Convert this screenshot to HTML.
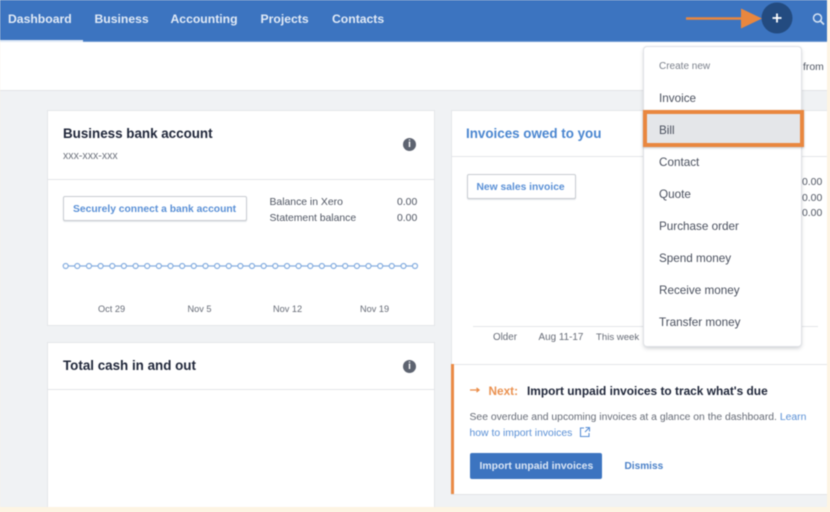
<!DOCTYPE html>
<html><head><meta charset="utf-8">
<style>
html,body{margin:0;padding:0;width:830px;height:512px;overflow:hidden;background:#fdf4e3}
#p{position:relative;width:830px;height:512px;overflow:hidden;font-family:"Liberation Sans",sans-serif;filter:blur(.5px);background:#fdf4e3}
#p div,#p span.t{position:absolute;white-space:nowrap}
.t{position:absolute;white-space:nowrap;line-height:14px}
.nav{color:#e1eaf6;font-weight:bold;font-size:12.2px;top:12px}
.card{background:#fff;box-shadow:0 0 0 1px #e4e6e9}
.h{color:#20273a;font-weight:bold;font-size:13.4px}
.g{color:#4f5562;font-size:10.4px}
.m{color:#4a505e;font-size:11.7px;left:659px}
.blue{color:#4a86d0;font-weight:bold}
.i{width:13px;height:13px;border-radius:50%;background:#5d6370;color:#fff;font:bold 10px/13px "Liberation Sans",sans-serif;text-align:center}
.line{height:1px;background:#e4e6e9}
</style></head><body><div id="p">
<div style="left:0;top:0;width:827px;height:507px;background:#f0f2f4"></div>
<div style="left:0;top:0;width:827px;height:42px;background:#3c74c0"></div>
<div style="left:0;top:40px;width:83px;height:2px;background:#dfe9f6"></div>
<div style="left:83px;top:41px;width:744px;height:1px;background:#6f9ad2"></div>
<div style="left:0;top:42px;width:827px;height:48px;background:#fff;border-bottom:1px solid #e2e4e7"></div>
<span class="t nav" style="left:8px">Dashboard</span>
<span class="t nav" style="left:94.500px">Business</span>
<span class="t nav" style="left:170.500px">Accounting</span>
<span class="t nav" style="left:260.500px">Projects</span>
<span class="t nav" style="left:332px">Contacts</span>
<svg style="position:absolute;left:685px;top:2px" width="145" height="34" viewBox="0 0 145 34">
<circle cx="92" cy="16" r="15.500" fill="#234b80"/>
<path d="M92 11.500v9M87.500 16h9" stroke="#fff" stroke-width="1.800" fill="none"/>
<path d="M1 16.500h58" stroke="#e9873f" stroke-width="2.500" fill="none"/>
<path d="M56 6.500l21 10-21 10z" fill="#e9873f"/>
<circle cx="132.500" cy="16" r="4" stroke="#d6e3f3" stroke-width="1.500" fill="none"/>
<path d="M135.500 19l3.500 3.500" stroke="#d6e3f3" stroke-width="1.700" fill="none"/>
</svg>
<span class="t" style="left:803px;top:60.500px;font-size:10.400px;color:#4f5562">from</span>

<div class="card" style="left:48px;top:111px;width:386px;height:214px"></div>
<span class="t h" style="left:63px;top:126.500px">Business bank account</span>
<span class="t" style="left:63px;top:148.500px;font-size:10.600px;color:#6b707b">xxx-xxx-xxx</span>
<div class="i" style="left:403px;top:138px">i</div>
<div class="line" style="left:48px;top:179px;width:386px"></div>
<div style="left:63px;top:196px;width:182px;height:23px;border:1px solid #c8ccd1;border-radius:2px;background:#fff;box-shadow:0 1px 1px #e4e6e9"></div>
<span class="t blue" style="left:73px;top:203px;font-size:10.300px;color:#5a90d6">Securely connect a bank account</span>
<span class="t g" style="left:269.500px;top:196px">Balance in Xero</span>
<span class="t g" style="left:269.500px;top:212px">Statement balance</span>
<span class="t g" style="left:397px;top:196px">0.00</span>
<span class="t g" style="left:397px;top:212px">0.00</span>
<svg style="position:absolute;left:60px;top:260px" width="362" height="12" viewBox="0 0 362 12">
<g fill="#fff" stroke="#86aee0" stroke-width="1.200">
<path d="M5.700 6H355"/>
<circle cx="5.700" cy="6" r="2.500"/><circle cx="17.300" cy="6" r="2.500"/><circle cx="29" cy="6" r="2.500"/><circle cx="40.600" cy="6" r="2.500"/><circle cx="52.300" cy="6" r="2.500"/><circle cx="63.900" cy="6" r="2.500"/><circle cx="75.600" cy="6" r="2.500"/><circle cx="87.200" cy="6" r="2.500"/><circle cx="98.900" cy="6" r="2.500"/><circle cx="110.500" cy="6" r="2.500"/><circle cx="122.200" cy="6" r="2.500"/><circle cx="133.800" cy="6" r="2.500"/><circle cx="145.500" cy="6" r="2.500"/><circle cx="157.100" cy="6" r="2.500"/><circle cx="168.800" cy="6" r="2.500"/><circle cx="180.400" cy="6" r="2.500"/><circle cx="192" cy="6" r="2.500"/><circle cx="203.700" cy="6" r="2.500"/><circle cx="215.300" cy="6" r="2.500"/><circle cx="227" cy="6" r="2.500"/><circle cx="238.600" cy="6" r="2.500"/><circle cx="250.300" cy="6" r="2.500"/><circle cx="261.900" cy="6" r="2.500"/><circle cx="273.600" cy="6" r="2.500"/><circle cx="285.200" cy="6" r="2.500"/><circle cx="296.900" cy="6" r="2.500"/><circle cx="308.500" cy="6" r="2.500"/><circle cx="320.200" cy="6" r="2.500"/><circle cx="331.800" cy="6" r="2.500"/><circle cx="343.500" cy="6" r="2.500"/><circle cx="355" cy="6" r="2.500"/>
</g></svg>
<span class="t" style="left:98px;top:302px;font-size:9.200px;color:#666b76">Oct 29</span>
<span class="t" style="left:187.500px;top:302px;font-size:9.200px;color:#666b76">Nov 5</span>
<span class="t" style="left:273px;top:302px;font-size:9.200px;color:#666b76">Nov 12</span>
<span class="t" style="left:360px;top:302px;font-size:9.200px;color:#666b76">Nov 19</span>

<div class="card" style="left:48px;top:343px;width:386px;height:170px"></div>
<span class="t h" style="left:63px;top:359px">Total cash in and out</span>
<div class="i" style="left:403px;top:359.500px">i</div>
<div class="line" style="left:48px;top:389px;width:386px"></div>

<div class="card" style="left:452px;top:111px;width:378px;height:382px"></div>
<span class="t blue" style="left:466px;top:126.500px;font-size:13.400px;color:#4a86d0">Invoices owed to you</span>
<div class="line" style="left:452px;top:156px;width:375px"></div>
<div style="left:467px;top:174px;width:107px;height:23px;border:1px solid #c8ccd1;border-radius:2px;background:#fff;box-shadow:0 1px 1px #e4e6e9"></div>
<span class="t blue" style="left:476.500px;top:180.500px;font-size:10.300px;color:#5a90d6">New sales invoice</span>
<span class="t g" style="left:802px;top:175.500px">0.00</span>
<span class="t g" style="left:802px;top:191.500px">0.00</span>
<span class="t g" style="left:802px;top:206.500px">0.00</span>
<div class="line" style="left:473px;top:326px;width:345px"></div>
<span class="t" style="left:493px;top:331px;font-size:9.800px;color:#666b76">Older</span>
<span class="t" style="left:538.500px;top:331px;font-size:9.900px;color:#666b76">Aug 11-17</span>
<span class="t" style="left:596px;top:331px;font-size:9.600px;color:#666b76">This week</span>

<div style="left:451px;top:364px;width:379px;height:130px;background:#fff;box-shadow:0 1px 0 #e2e4e7"></div>
<div class="line" style="left:451px;top:364px;width:379px"></div>
<div style="left:451px;top:364px;width:3px;height:130px;background:#ea8a45"></div>
<svg style="position:absolute;left:470px;top:385px" width="11" height="10" viewBox="0 0 11 10"><path d="M0 5h8M6.500 3L9 5 6.500 7" stroke="#ea8a45" stroke-width="1.300" fill="none"/></svg>
<span class="t" style="left:488.500px;top:384px;font-size:11.800px;font-weight:bold;color:#ea9150">Next:</span>
<span class="t" style="left:527px;top:384px;font-size:11.900px;font-weight:bold;color:#20273a">Import unpaid invoices to track what's due</span>
<span class="t" style="left:469.500px;top:410.500px;font-size:10.380px;color:#666b76">See overdue and upcoming invoices at a glance on the dashboard. <span style="color:#5a90d6">Learn</span></span>
<span class="t" style="left:469.500px;top:426.500px;font-size:10.400px;color:#5a90d6">how to import invoices</span>
<svg style="position:absolute;left:579px;top:426px" width="12" height="12" viewBox="0 0 12 12"><path d="M5 2H1.500v8.500H10V7M6.500 1.500H10.500V5.500M10.500 1.500L6 6" stroke="#5a90d6" stroke-width="1.100" fill="none"/></svg>
<div style="left:470px;top:453px;width:132px;height:26px;background:#3c74c0;border-radius:2px"></div>
<span class="t" style="left:479.500px;top:460px;font-size:10.400px;font-weight:bold;color:#dbe6f5">Import unpaid invoices</span>
<span class="t blue" style="left:624.500px;top:460px;font-size:10.100px;color:#4a80c8">Dismiss</span>

<div style="left:827px;top:0;width:3px;height:512px;background:#fdf4e3"></div>
<div style="left:0;top:507px;width:830px;height:5px;background:#fdf4e3"></div>

<div style="left:644px;top:47px;width:157px;height:299px;background:#fff;border-radius:3px;box-shadow:0 0 0 1px #dfe1e5,0 2px 4px rgba(60,65,80,.3)"></div>
<span class="t" style="left:659px;top:60px;font-size:10px;color:#7b808b">Create new</span>
<span class="t m" style="top:91.500px">Invoice</span>
<div style="left:643px;top:110px;width:153px;height:29px;background:#e4e6e9;border:4px solid #e9873f;box-shadow:0 1px 2px rgba(60,65,80,.3)"></div>
<span class="t m" style="top:123.500px">Bill</span>
<span class="t m" style="top:155.500px">Contact</span>
<span class="t m" style="top:187.500px">Quote</span>
<span class="t m" style="top:219.500px">Purchase order</span>
<span class="t m" style="top:251.500px">Spend money</span>
<span class="t m" style="top:283.500px">Receive money</span>
<span class="t m" style="top:315.500px">Transfer money</span>
</div></body></html>
